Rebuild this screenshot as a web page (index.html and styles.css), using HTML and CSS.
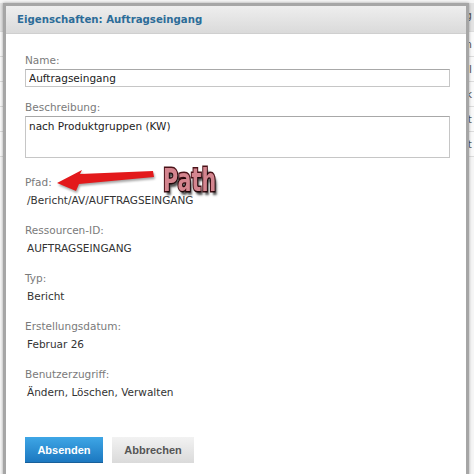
FILE: index.html
```html
<!DOCTYPE html>
<html>

<head>
    <title>Eigenschaften</title>
    <link rel="stylesheet" href="styles.css">
</head>

<body>
    <!-- page behind the dialog -->
    <div class="page">
        <div class="row row-head">Bezeichnung</div>
        <div class="row">Produktgruppen</div>
        <div class="row">Bericht:l</div>
        <div class="row">Berichtlk</div>
        <div class="row">Bericht</div>
        <div class="row">Bericht</div>
    </div>

    <div class="dialog">
        <div class="dialog-head">Eigenschaften: Auftragseingang</div>

        <div class="dialog-body">
            <label class="label">Name:</label>
            <input type="text" class="field" value="Auftragseingang">

            <label class="label gap">Beschreibung:</label>
            <textarea class="field area">nach Produktgruppen (KW)</textarea>

            <div class="group first">
                <div class="label">Pfad:</div>
                <div class="value">/Bericht/AV/AUFTRAGSEINGANG</div>
            </div>
            <div class="group">
                <div class="label">Ressourcen-ID:</div>
                <div class="value">AUFTRAGSEINGANG</div>
            </div>
            <div class="group">
                <div class="label">Typ:</div>
                <div class="value">Bericht</div>
            </div>
            <div class="group">
                <div class="label">Erstellungsdatum:</div>
                <div class="value">Februar 26</div>
            </div>
            <div class="group">
                <div class="label">Benutzerzugriff:</div>
                <div class="value">Ändern, Löschen, Verwalten</div>
            </div>

            <div class="buttons">
                <button class="btn btn-blue">Absenden</button>
                <button class="btn btn-grey">Abbrechen</button>
            </div>
        </div>

        <!-- annotation -->
        <svg class="arrow" width="110" height="36" viewBox="0 0 110 36">
            <polygon points="7,23 32,10 30,14 103,11 104,17 29,24 26,31" fill="#e3191b" />
        </svg>
        <span class="note">Path</span>
    </div>
</body>

</html>
```

FILE: styles.css
```css
body {
    margin: 0;
    background-color: #f6f6f6;
    font-family: "DejaVu Sans", Verdana, sans-serif;
    font-size: 10.5px;
    overflow: hidden;
}

/* page in the background */
.page {
    padding-top: 3px;
}

.row {
    height: 24px;
    line-height: 24px;
    border-bottom: 1px solid #dcdcdc;
    color: #555;
    white-space: nowrap;
    overflow: hidden;
    text-align: right;
    padding-right: 2px;
    background-color: #fafafa;
}

.row-head {
    background-color: #e4e4e4;
    height: 28px;
}

/* dialog */
.dialog {
    position: absolute;
    left: 3px;
    top: 3px;
    width: 460px;
    height: 490px;
    background-color: #ffffff;
    border: 3px solid #a6a6a6;
    border-bottom: none;
    box-shadow: 0 0 3px rgba(0, 0, 0, 0.35);
}

.dialog-head {
    height: 27px;
    line-height: 27px;
    padding-left: 11px;
    background: linear-gradient(#eeeeee, #dadada);
    border-bottom: 1px solid #cfcfcf;
    color: #2c6c98;
    font-weight: bold;
    font-size: 10.2px;
}

.dialog-body {
    padding: 18px 19px 0 19px;
}

.label {
    display: block;
    color: #7a7a7a;
    line-height: 17px;
}

.gap {
    margin-top: 12px;
}

.field {
    display: block;
    box-sizing: border-box;
    width: 425px;
    height: 18px;
    margin: 0;
    padding: 0 3px;
    border: 1px solid #c6c6c6;
    border-top-color: #a8a8a8;
    font-family: "DejaVu Sans", Verdana, sans-serif;
    font-size: 10.5px;
    color: #222;
}

.area {
    height: 42px;
    padding-top: 3px;
    resize: none;
}

.group {
    margin-top: 13px;
}

.first {
    margin-top: 16px;
}

.value {
    color: #333;
    line-height: 18px;
    padding-left: 2px;
}

.buttons {
    display: flex;
    gap: 9px;
    margin-top: 36px;
}

.btn {
    height: 26px;
    border: none;
    font-family: "Liberation Sans", Arial, sans-serif;
    font-weight: bold;
    font-size: 11px;
    padding: 0;
}

.btn-blue {
    width: 78px;
    background: linear-gradient(#3ea6e6, #1c78c0);
    color: #ffffff;
    border-bottom: 1px solid #18609a;
}

.btn-grey {
    width: 82px;
    background: linear-gradient(#f2f2f2, #dadada);
    color: #555555;
}

/* red arrow and label drawn over the form */
.arrow {
    position: absolute;
    left: 44px;
    top: 154px;
    filter: drop-shadow(1px 2px 1px rgba(0, 0, 0, 0.35));
}

.note {
    position: absolute;
    left: 157px;
    top: 155px;
    font-family: "DejaVu Sans Condensed", "DejaVu Sans", sans-serif;
    font-weight: bold;
    font-size: 23px;
    color: #d4858f;
    -webkit-text-stroke: 2px #4a1218;
    paint-order: stroke fill;
    text-shadow: 2px 3px 2px rgba(0, 0, 0, 0.7);
    transform: scaleY(1.42);
    transform-origin: top left;
}
```
